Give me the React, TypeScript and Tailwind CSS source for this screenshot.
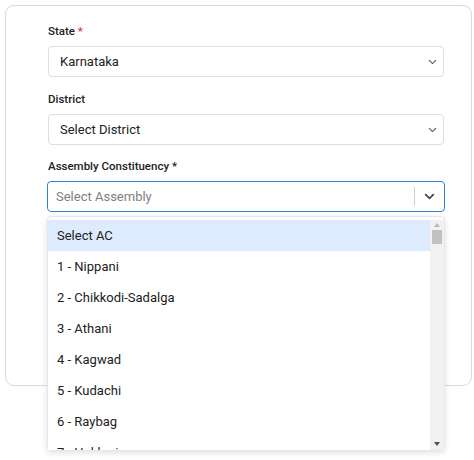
import React from 'react';

const options = [
  'Select AC',
  '1 - Nippani',
  '2 - Chikkodi-Sadalga',
  '3 - Athani',
  '4 - Kagwad',
  '5 - Kudachi',
  '6 - Raybag',
  '7 - Hukkeri',
  '8 - Arabhavi',
];

function NativeSelect({ value }: { value: string }) {
  return (
    <div className="flex h-[31px] items-center justify-between rounded-[4px] border border-[#dedede] bg-white pl-[11px] pr-[6px] text-[13px] text-[#222]">
      <span>{value}</span>
      <svg width="9" height="6" viewBox="0 0 9 6" fill="none">
        <path d="M1 1.2 L4.5 4.6 L8 1.2" stroke="#555" strokeWidth="1.1" />
      </svg>
    </div>
  );
}

export default function App() {
  return (
    <div className="min-h-[460px] bg-white pl-[5px] pt-[5px] font-['Roboto',sans-serif]">
      <div className="h-[381px] w-[467px] rounded-[9px] border border-[#d9d9d9] pl-[42px] pr-[27px] pt-[17px]">
        {/* State */}
        <label className="block text-[11.5px] font-medium leading-[16px] text-[#222]">
          State <span className="text-[#e53935]">*</span>
        </label>
        <div className="mt-[7px]">
          <NativeSelect value="Karnataka" />
        </div>

        {/* District */}
        <label className="mt-[14px] block text-[11.5px] font-medium leading-[16px] text-[#222]">
          District
        </label>
        <div className="mt-[7px]">
          <NativeSelect value="Select District" />
        </div>

        {/* Assembly */}
        <label className="mt-[13px] block text-[11.5px] font-medium leading-[16px] text-[#222]">
          Assembly Constituency *
        </label>
        <div className="relative mt-[7px]">
          <div className="-mx-px flex h-[31px] items-center rounded-[4px] border-[1.5px] border-[#2f7fe0] bg-white pl-[8px] text-[13px] text-[#808080]">
            <span className="flex-1">Select Assembly</span>
            <span className="h-[19px] w-px bg-[#cfcfcf]" />
            <span className="flex w-[29px] items-center justify-center">
              <svg width="11" height="7" viewBox="0 0 11 7" fill="none">
                <path d="M1.2 1.2 L5.5 5.3 L9.8 1.2" stroke="#444" strokeWidth="1.7" />
              </svg>
            </span>
          </div>

          {/* Dropdown list */}
          <div className="absolute left-[-1px] right-[-1px] top-[35px] z-10 rounded-[4px] border border-[#e6e6e6] bg-white pt-[3px] shadow-[0_2px_6px_rgba(0,0,0,0.12)]">
            <div className="relative flex h-[230px] overflow-hidden">
              <ul className="flex-1">
                {options.map((o, i) => (
                  <li
                    key={o}
                    className={`flex h-[31px] items-center pl-[9px] text-[13px] text-[#222] ${
                      i === 0 ? 'bg-[#deebff]' : 'bg-white'
                    }`}
                  >
                    {o}
                  </li>
                ))}
              </ul>
              {/* scrollbar */}
              <div className="relative w-[14px] bg-[#f1f1f1]">
                <svg className="absolute left-[4px] top-[3px]" width="6" height="4" viewBox="0 0 6 4">
                  <path d="M0 4 L3 0 L6 4 Z" fill="#b8b8b8" />
                </svg>
                <div className="absolute left-[2px] top-[10px] h-[14px] w-[10px] bg-[#c1c1c1]" />
                <svg className="absolute bottom-[4px] left-[4px]" width="6" height="4" viewBox="0 0 6 4">
                  <path d="M0 0 L6 0 L3 4 Z" fill="#505050" />
                </svg>
              </div>
            </div>
          </div>
        </div>
      </div>
    </div>
  );
}
